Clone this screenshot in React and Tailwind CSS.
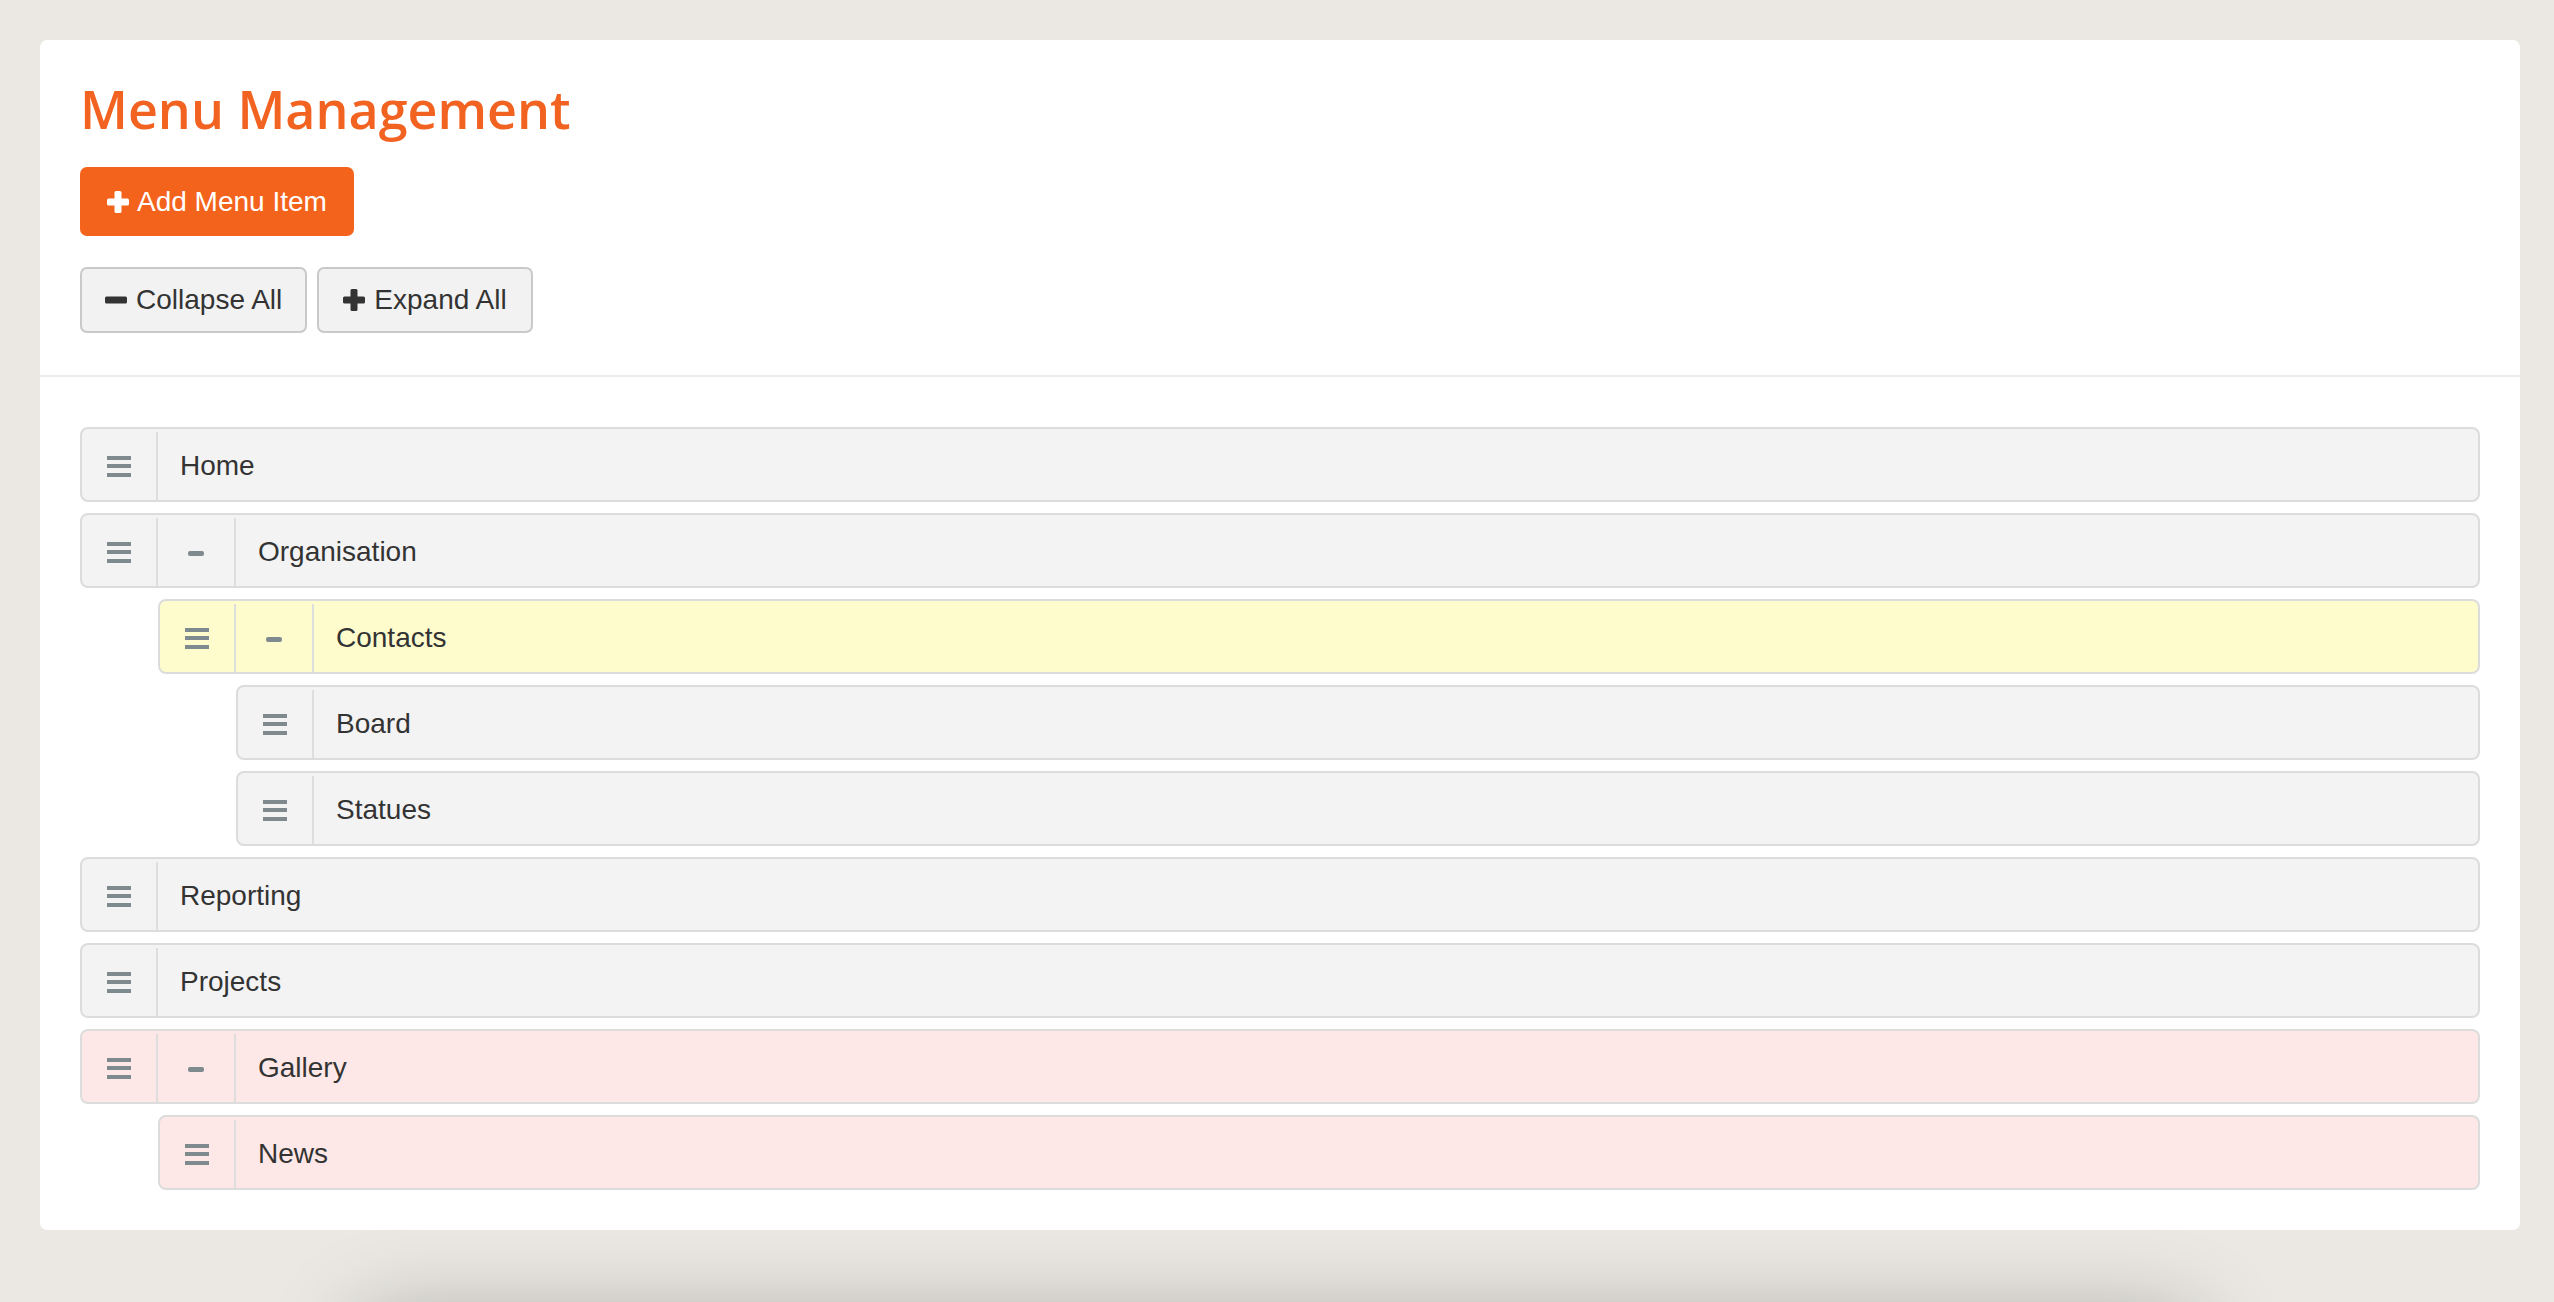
import React from 'react';

const items = [
    {label: "Home", level: 0, toggle: false, tone: "gray"},
    {label: "Organisation", level: 0, toggle: true, tone: "gray"},
    {label: "Contacts", level: 1, toggle: true, tone: "yellow"},
    {label: "Board", level: 2, toggle: false, tone: "gray"},
    {label: "Statues", level: 2, toggle: false, tone: "gray"},
    {label: "Reporting", level: 0, toggle: false, tone: "gray"},
    {label: "Projects", level: 0, toggle: false, tone: "gray"},
    {label: "Gallery", level: 0, toggle: true, tone: "pink"},
    {label: "News", level: 1, toggle: false, tone: "pink"},
];

const indent = ["ml-0", "ml-[78px]", "ml-[156px]"];
const tones = {
    gray: "bg-[#f3f3f3]",
    yellow: "bg-[#fefbcd]",
    pink: "bg-[#fee8e7]",
};

function Bars() {
    return (
        <svg width="24" height="21" viewBox="0 0 24 21" fill="#7f8a8f" shapeRendering="crispEdges">
            <rect x="0" y="0" width="24" height="4" rx="1"/>
            <rect x="0" y="8" width="24" height="4" rx="1"/>
            <rect x="0" y="17" width="24" height="4" rx="1"/>
        </svg>
    );
}

function Plus({color}) {
    return (
        <svg width="22" height="22" viewBox="0 0 22 22" fill={color}>
            <rect x="7.5" y="0" width="7" height="22" rx="1.5"/>
            <rect x="0" y="7.5" width="22" height="7" rx="1.5"/>
        </svg>
    );
}

function Minus({color}) {
    return (
        <svg width="22" height="22" viewBox="0 0 22 22" fill={color}>
            <rect x="0" y="7.5" width="22" height="7" rx="1.5"/>
        </svg>
    );
}

function Row({item}) {
    return (
        <div className={`${indent[item.level]} ${tones[item.tone]} flex h-[75px] rounded-[8px] border-2 border-[#dcdcdc] pt-[3px]`}>
            <div className="flex w-[76px] shrink-0 items-center justify-center border-r-2 border-[#dedede]">
                <Bars/>
            </div>
            {item.toggle && (
                <div className="flex w-[78px] shrink-0 items-center justify-center border-r-2 border-[#dedede]">
                    <span className="mt-[3px] block h-[5px] w-[16px] rounded-[2px] bg-[#7f8a8f]"></span>
                </div>
            )}
            <div className="flex items-center pl-[22px] text-[28px] text-[#333333]">{item.label}</div>
        </div>
    );
}

export default function App() {
    return (
        <div className="h-[1302px] overflow-hidden bg-[#ebe8e3] pt-[40px]"
             style={{fontFamily: '"Liberation Sans", Arial, sans-serif'}}>
            <div className="ml-[40px] w-[2480px] rounded-[7px] bg-white">
                <div className="border-b-2 border-[#ececec] px-[40px] pt-[43px] pb-[42px]">
                    <h1 className="text-[52px] font-semibold leading-none text-[#f26322]"
                        style={{fontFamily: '"Open Sans", sans-serif'}}>Menu Management</h1>
                    <button
                        className="mt-[32px] flex h-[69px] items-center gap-[8px] rounded-[7px] bg-[#f4631c] px-[27px] text-[28px] text-white">
                        <Plus color="#ffffff"/>
                        <span>Add Menu Item</span>
                    </button>
                    <div className="mt-[31px] flex gap-[10px]">
                        <button
                            className="flex h-[66px] items-center gap-[9px] rounded-[7px] border-2 border-[#c9c9c9] bg-[#f2f2f2] px-[23px] text-[28px] text-[#333333]">
                            <Minus color="#333333"/>
                            <span>Collapse All</span>
                        </button>
                        <button
                            className="flex h-[66px] items-center gap-[9px] rounded-[7px] border-2 border-[#c9c9c9] bg-[#f2f2f2] px-[24px] text-[28px] text-[#333333]">
                            <Plus color="#333333"/>
                            <span>Expand All</span>
                        </button>
                    </div>
                </div>
                <div className="flex flex-col gap-[11px] px-[40px] pt-[50px] pb-[40px]">
                    {items.map((item) => (
                        <Row key={item.label} item={item}/>
                    ))}
                </div>
            </div>
            <div className="mx-[360px] mt-[90px] h-[200px] bg-[#ebe8e3] shadow-[0_0_90px_rgba(0,0,0,0.3)]"></div>
        </div>
    );
}
